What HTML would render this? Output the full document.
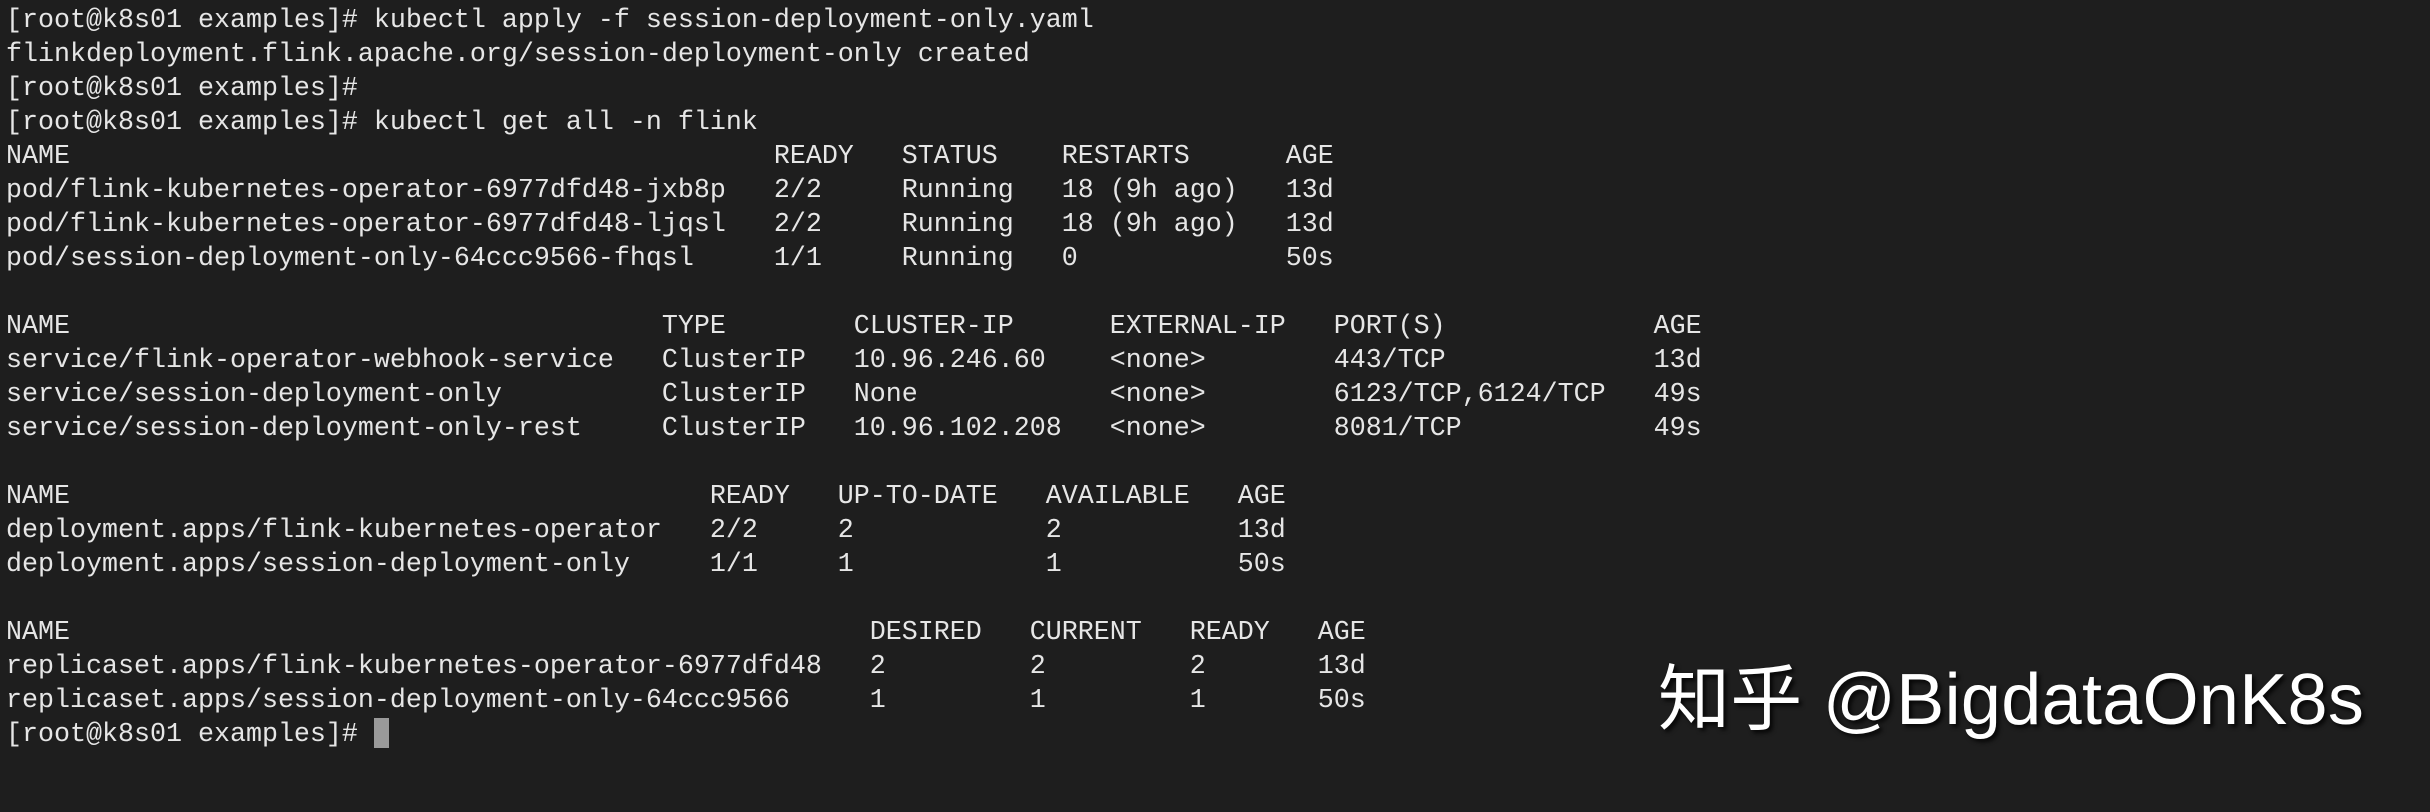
<!DOCTYPE html>
<html><head><meta charset="utf-8"><style>
html,body{margin:0;padding:0;background:#1e1e1e;width:2430px;height:812px;overflow:hidden}
pre{position:absolute;left:6px;top:4px;margin:0;font-family:"Liberation Mono",monospace;font-size:26.67px;line-height:34px;color:#e6e6e6;letter-spacing:0}
.cur{display:inline-block;width:15px;height:30px;background:#9a9a9a;vertical-align:-7px}
.wm{position:absolute;left:1658px;top:655px;font-family:"Liberation Sans","Noto Sans CJK SC",sans-serif;font-size:72px;color:#fff;text-shadow:3px 3px 4px rgba(0,0,0,.8);white-space:nowrap;line-height:90px;letter-spacing:0.3px}
</style></head><body>
<pre>[root@k8s01 examples]# kubectl apply -f session-deployment-only.yaml
flinkdeployment.flink.apache.org/session-deployment-only created
[root@k8s01 examples]#
[root@k8s01 examples]# kubectl get all -n flink
NAME                                            READY   STATUS    RESTARTS      AGE
pod/flink-kubernetes-operator-6977dfd48-jxb8p   2/2     Running   18 (9h ago)   13d
pod/flink-kubernetes-operator-6977dfd48-ljqsl   2/2     Running   18 (9h ago)   13d
pod/session-deployment-only-64ccc9566-fhqsl     1/1     Running   0             50s

NAME                                     TYPE        CLUSTER-IP      EXTERNAL-IP   PORT(S)             AGE
service/flink-operator-webhook-service   ClusterIP   10.96.246.60    &lt;none&gt;        443/TCP             13d
service/session-deployment-only          ClusterIP   None            &lt;none&gt;        6123/TCP,6124/TCP   49s
service/session-deployment-only-rest     ClusterIP   10.96.102.208   &lt;none&gt;        8081/TCP            49s

NAME                                        READY   UP-TO-DATE   AVAILABLE   AGE
deployment.apps/flink-kubernetes-operator   2/2     2            2           13d
deployment.apps/session-deployment-only     1/1     1            1           50s

NAME                                                  DESIRED   CURRENT   READY   AGE
replicaset.apps/flink-kubernetes-operator-6977dfd48   2         2         2       13d
replicaset.apps/session-deployment-only-64ccc9566     1         1         1       50s
[root@k8s01 examples]# <span class="cur"></span></pre>
<div class="wm">知乎 @BigdataOnK8s</div>
</body></html>
